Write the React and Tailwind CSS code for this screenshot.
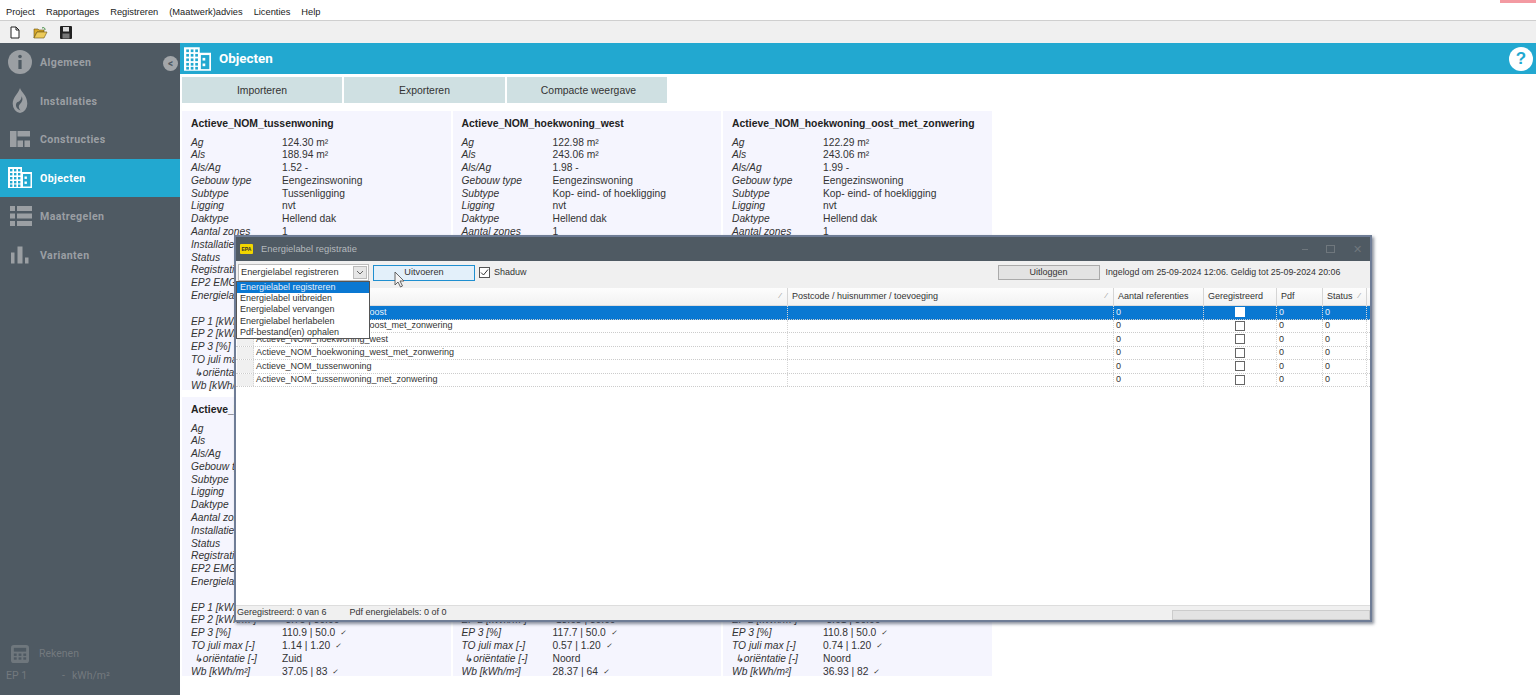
import React from "react";

const FONT = "font-['Liberation_Sans',Arial,sans-serif]";

function Row({ label, value, check }) {
  return (
    <div className="flex h-[12.8px] items-center whitespace-nowrap leading-[13px]">
      <div className="w-[91px] shrink-0 italic">{label}</div>
      <div className="flex items-center">
        {value}
        {check && value && <span className="ml-[5px] text-[7px] italic leading-none">✓</span>}
      </div>
    </div>
  );
}

function Card({ title, rows }) {
  return (
    <div className="h-[279px] bg-[#f5f5fe] pl-[9px] pt-[6px] text-[10.25px] text-[#333]">
      <div className="mb-[4.6px] h-[14px] whitespace-nowrap text-[10.4px] font-bold leading-[14px] text-[#222]">{title}</div>
      {rows.map((r, i) =>
        r ? <Row key={i} label={r[0]} value={r[1]} check={r[2]} /> : <div key={i} className="h-[12.8px]" />
      )}
    </div>
  );
}

const tail = (ep1, ep2, ep3, to, or, wb) => [
  null,
  ["EP 1 [kWh/m²]", ep1, true],
  ["EP 2 [kWh/m²]", ep2, true],
  ["EP 3 [%]", ep3, true],
  ["TO juli max [-]", to, true],
  ["\u00a0\u21B3oriëntatie [-]", or],
  ["Wb [kWh/m²]", wb, true],
];
const head = (ag, als, r, sub) => [
  ["Ag", ag],
  ["Als", als],
  ["Als/Ag", r],
  ["Gebouw type", sub ? "Eengezinswoning" : ""],
  ["Subtype", sub],
  ["Ligging", sub ? "nvt" : ""],
  ["Daktype", sub ? "Hellend dak" : ""],
  ["Aantal zones", sub ? "1" : ""],
  ["Installaties", ""],
  ["Status", ""],
  ["Registratie", ""],
  ["EP2 EMG", ""],
  ["Energielabel", ""],
];

const cards = [
  { title: "Actieve_NOM_tussenwoning", rows: [...head("124.30 m²", "188.94 m²", "1.52 -", "Tussenligging"), ...tail("", "", "", "", "", "")] },
  { title: "Actieve_NOM_hoekwoning_west", rows: [...head("122.98 m²", "243.06 m²", "1.98 -", "Kop- eind- of hoekligging"), ...tail("", "", "", "", "", "")] },
  { title: "Actieve_NOM_hoekwoning_oost_met_zonwering", rows: [...head("122.29 m²", "243.06 m²", "1.99 -", "Kop- eind- of hoekligging"), ...tail("", "", "", "", "", "")] },
  { title: "Actieve_NOM_hoekwoning_oost", rows: [...head("", "", "", ""), ...tail("", "-3.75 | 30.00", "110.9 | 50.0", "1.14 | 1.20", "Zuid", "37.05 | 83")] },
  { title: "Actieve_NOM_hoekwoning_west_met_zonwering", rows: [...head("", "", "", ""), ...tail("", "-13.68 | 30.00", "117.7 | 50.0", "0.57 | 1.20", "Noord", "28.37 | 64")] },
  { title: "Actieve_NOM_tussenwoning_met_zonwering", rows: [...head("", "", "", ""), ...tail("", "-3.61 | 30.00", "110.8 | 50.0", "0.74 | 1.20", "Noord", "36.93 | 82")] },
];

const I = ({ children, w = 24, h = 24, vb = "0 0 24 24", c = "#9b9fa3" }) => (
  <svg width={w} height={h} viewBox={vb} fill={c} className="shrink-0">{children}</svg>
);

const InfoIcon = () => (
  <I>
    <circle cx="12" cy="12" r="12" />
    <circle cx="12" cy="6.5" r="1.8" fill="#4f5a63" />
    <rect x="10.4" y="10" width="3.2" height="9" fill="#4f5a63" />
  </I>
);
const FlameIcon = () => (
  <I w={18} h={25} vb="4.500 0 15 24">
    <path d="M12 0c1 4 7 7 7 15a7.500 9 0 0 1-7 9 7.500 9 0 0 1-7-9C5 9 10 6 12 0Z" />
    <path d="M13.500 8c2 3.500 0 6-2 8-1 1-1 3 1 5.500-4-1-5.500-5-3.500-7.500 2-1 4.500-2 4.500-6Z" fill="#4f5a63" />
  </I>
);
const GridIcon = () => (
  <I w={20} h={16} vb="0 0 20 16">
    <rect x="0" y="0" width="6.500" height="16" />
    <rect x="7.500" y="0" width="12.500" height="5.500" />
    <rect x="7.500" y="9.500" width="5.500" height="6.500" />
    <rect x="14.500" y="9.500" width="5.500" height="6.500" />
  </I>
);
const BuildingIcon = ({ w = 24, h = 21, bg = "#22a8d0" }) => (
  <I w={w} h={h} vb="0 0 24 21" c="#fff">
    <path d="M0 0h14v5h10v16H0Z" />
    {[2, 6, 10].flatMap((x) =>
      [2, 6, 10, 14, 17.500].map((y) => <rect key={x + "-" + y} x={x} y={y} width="2.400" height="2.400" fill={bg} />)
    )}
    <rect x="15" y="7" width="7.500" height="12.500" fill={bg} />
    <rect x="16.500" y="9.500" width="2.400" height="2.400" fill="#fff" />
    <rect x="16.500" y="14.500" width="2.400" height="2.400" fill="#fff" />
  </I>
);
const ListIcon = () => (
  <I>
    {[2, 9.500, 17].map((y) => (
      <g key={y}>
        <rect x="2" y={y} width="5" height="5" />
        <rect x="9" y={y} width="15" height="5" />
      </g>
    ))}
  </I>
);
const BarsIcon = () => (
  <I>
    <rect x="3" y="9.500" width="3.500" height="11" />
    <rect x="9.500" y="3.500" width="5" height="17" />
    <rect x="17" y="14.500" width="3.500" height="6" />
  </I>
);
const CalcIcon = () => (
  <svg width="18" height="18" viewBox="0 0 19 19" className="shrink-0">
    <rect width="19" height="19" rx="3" fill="#6f777d" />
    <rect x="3" y="3" width="13" height="4" fill="#4f5a63" />
    {[3, 8, 13].flatMap((x) => [9, 13].map((y) => <rect key={x + "-" + y} x={x} y={y} width="3" height="2.500" fill="#4f5a63" />))}
  </svg>
);

const nav = [
  ["Algemeen", <InfoIcon />],
  ["Installaties", <FlameIcon />],
  ["Constructies", <GridIcon />],
  ["Objecten", <BuildingIcon />],
  ["Maatregelen", <ListIcon />],
  ["Varianten", <BarsIcon />],
];

const colW = ["w-[17px]", "w-[534px]", "w-[326px]", "w-[90px]", "w-[73px]", "w-[46px]", "w-[44px]"];
const names = [
  "Actieve_NOM_hoekwoning_oost",
  "Actieve_NOM_hoekwoning_oost_met_zonwering",
  "Actieve_NOM_hoekwoning_west",
  "Actieve_NOM_hoekwoning_west_met_zonwering",
  "Actieve_NOM_tussenwoning",
  "Actieve_NOM_tussenwoning_met_zonwering",
];

function Sort() {
  return <span className="absolute right-[6px] top-[2px] text-[8px] text-[#999]">⁄</span>;
}

function Dialog() {
  return (
    <div className="absolute left-[234px] top-[235px] flex h-[387px] w-[1138px] flex-col border-2 border-[#6f7d96] bg-white text-[9px] text-[#333] shadow-[2px_2px_3px_rgba(60,70,90,0.6)]">
      <div className="flex h-[24px] shrink-0 items-center bg-[#4f5a63] pl-[4px] pr-[8px] text-[#b4b9bd]">
        <div className="flex h-[10px] w-[13px] items-center justify-center rounded-[1px] bg-[#f2d500] text-[5px] font-bold leading-none text-[#333]">EPA</div>
        <span className="ml-[8px] text-[9.4px]">Energielabel registratie</span>
        <div className="ml-auto flex items-center gap-[18px] text-[#6f777d]">
          <div className="h-px w-[6px] bg-[#6f777d]" />
          <div className="h-[8px] w-[9px] border border-[#6f777d]" />
          <span className="text-[11px] leading-none">✕</span>
        </div>
      </div>
      <div className="flex h-[27px] shrink-0 items-center bg-[#f0f0f0] pb-[4px] pl-[2px]">
        <div className="flex h-[17px] w-[131px] items-center justify-between border border-[#bbb] bg-white pl-[2px] pr-[1px] text-[9.2px]">
          <span>Energielabel registreren</span>
          <div className="flex h-[13px] w-[14px] items-center justify-center border border-[#bbb] bg-[#e6e6e6]">
            <svg width="8" height="5" viewBox="0 0 8 5" fill="none" stroke="#666"><path d="M1 1l3 3 3-3" /></svg>
          </div>
        </div>
        <div className="ml-[4px] flex h-[16px] w-[102px] items-center justify-center border border-[#1f8fd0] bg-[#e3f0fa] text-[9.2px]">Uitvoeren</div>
        <div className="ml-[4px] flex h-[11px] w-[11px] items-center justify-center border border-[#555] bg-white">
          <svg width="9" height="9" viewBox="0 0 9 9" fill="none" stroke="#333"><path d="M1 4.500l2.500 2.500L8 1.500" /></svg>
        </div>
        <span className="ml-[4px]">Shaduw</span>
        <div className="ml-[471px] flex h-[15px] w-[102px] items-center justify-center border border-[#aaa] bg-[#e3e3e3]">Uitloggen</div>
        <span className="ml-[6px] whitespace-nowrap text-[8.8px]">Ingelogd om 25-09-2024 12:06. Geldig tot 25-09-2024 20:06</span>
      </div>
      <div className="flex h-[18px] shrink-0 border-b border-[#ddd] bg-[linear-gradient(#fdfdfd,#f2f2f2)] pl-px">
        {["", "", "Postcode / huisnummer / toevoeging", "Aantal referenties", "Geregistreerd", "Pdf", "Status"].map((h, i) => (
          <div key={i} className={`${colW[i]} relative flex items-center border-r border-[#d5d5d5] pl-[4px]`}>
            {h}
            {(i === 1 || i === 2 || i === 6) && <Sort />}
          </div>
        ))}
      </div>
      <div className="flex-1">
        {names.map((n, r) => (
          <div key={n} className={`flex h-[13.5px] border-b border-dotted border-[#ccc] pl-px ${r === 0 ? "bg-[#0a78d2] text-[#e8f2fb]" : ""}`}>
            {colW.map((w, i) => (
              <div key={i} className={`${w} flex items-center border-r border-dotted border-[#d5d5d5] ${i === 0 ? "bg-[#f0f0f0]" : "pl-[2px]"} ${i === 4 ? "justify-center !pl-0" : ""}`}>
                {i === 1 && n}
                {(i === 3 || i === 5 || i === 6) && "0"}
                {i === 4 && <div className={`h-[10px] w-[10px] border bg-white ${r === 0 ? "border-white" : "border-[#666]"}`} />}
              </div>
            ))}
          </div>
        ))}
      </div>
      <div className="flex h-[15px] shrink-0 items-center border-t border-[#ddd] bg-[#f0f0f0] pl-[1px]">
        <span>Geregistreerd: 0 van 6</span>
        <span className="ml-[23px]">Pdf energielabels: 0 of 0</span>
        <div className="ml-auto h-[10px] w-[198px] self-end border border-[#ccc] bg-[#e3e3e3]" />
      </div>
      <div className="absolute left-0 top-[44px] z-10 w-[134px] border border-[#555] bg-white text-[9px] leading-[11.2px]">
        {["Energielabel registreren", "Energielabel uitbreiden", "Energielabel vervangen", "Energielabel herlabelen", "Pdf-bestand(en) ophalen"].map((t, i) => (
          <div key={t} className={`pl-[3px] ${i === 0 ? "bg-[#0a78d2] text-[#e8f2fb]" : ""}`}>{t}</div>
        ))}
      </div>
      <svg width="13" height="18" viewBox="0 0 13 18" className="absolute left-[158px] top-[34px] z-10">
        <path d="M1 1v13l3-3 2.500 5 2-1-2.500-5h4Z" fill="#f4f4f4" stroke="#555" strokeWidth="0.9" />
      </svg>
    </div>
  );
}

export default function App() {
  return (
    <div className={`${FONT} relative flex h-[695px] w-[1536px] flex-col overflow-hidden bg-white`}>
      <div className="flex h-[5px] shrink-0 justify-end bg-white">
        <div className="h-[3px] w-[36px] bg-[#f39aa2]" />
      </div>
      <div className="flex h-[16px] shrink-0 items-center gap-[11px] border-b border-[#cfcfcf] pl-[6px] pt-[1px] text-[9.3px] text-[#222]">
        {["Project", "Rapportages", "Registreren", "(Maatwerk)advies", "Licenties", "Help"].map((m) => (
          <span key={m}>{m}</span>
        ))}
      </div>
      <div className="flex h-[22px] shrink-0 items-center gap-[12px] bg-[#f0f0f0] pl-[9px]">
        <svg width="12" height="13" viewBox="0 0 12 13" fill="#fff" stroke="#222"><path d="M2 1h5l3 3v8H2Z" /><path d="M7 1v3h3" fill="none" /></svg>
        <svg width="15" height="13" viewBox="0 0 15 13"><path d="M1 3h4l1 1h5v2H4L1 12Z" fill="#d9a928" stroke="#6b5510" strokeWidth=".6" /><path d="M1 12l3-6h10l-3 6Z" fill="#ecca5a" stroke="#6b5510" strokeWidth=".6" /><path d="M9 2c2-1 3 0 3 2" fill="none" stroke="#3c8a3c" /></svg>
        <svg width="12" height="13" viewBox="0 0 12 13"><rect width="12" height="13" rx="1" fill="#222" /><rect x="3" y="1" width="6" height="4.500" fill="#ddd" /><rect x="2.500" y="7.500" width="7" height="5" fill="#777" /></svg>
      </div>
      <div className="flex flex-1">
        <div className="flex w-[180px] shrink-0 flex-col bg-[#4f5a63] font-['Roboto',sans-serif]">
          <div className="relative">
            {nav.map(([t, icon]) => (
              <div key={t} className={`flex h-[38.5px] items-center gap-[8px] pl-[8px] text-[10.6px] font-bold tracking-[0.4px] ${t === "Objecten" ? "bg-[#22a8d0] text-white" : "text-[#9b9fa3]"}`}>
                <div className="flex w-[24px] justify-center">{icon}</div>
                <span className="pt-[2px]">{t}</span>
              </div>
            ))}
            <div className="absolute left-[163px] top-[13px] flex h-[15px] w-[15px] items-center justify-center rounded-full bg-[#a3a6a9] text-[10px] font-bold leading-none text-[#4f5a63]">&lt;</div>
          </div>
          <div className="mt-auto flex h-[25px] items-center gap-[10px] pl-[11px] text-[10.5px] text-[#73797e]">
            <CalcIcon />
            <span>Rekenen</span>
          </div>
          <div className="mb-[11px] mt-[2px] flex h-[16px] items-center pl-[6px] text-[10.5px] text-[#73797e]">
            <span className="w-[56px]">EP 1</span>
            <span className="w-[10px]">-</span>
            <span>kWh/m²</span>
          </div>
        </div>
        <div className="flex min-w-0 flex-1 flex-col">
          <div className="flex h-[31px] shrink-0 items-center bg-[#22a8d0] pl-[4px] pr-[3px] text-white">
            <BuildingIcon w={27} h={24} />
            <span className="ml-[8px] pt-[2px] font-['Roboto',sans-serif] text-[13.4px] font-bold">Objecten</span>
            <div className="ml-auto flex h-[24px] w-[24px] items-center justify-center rounded-full bg-white text-[17px] font-bold leading-none text-[#22a8d0]">?</div>
          </div>
          <div className="mt-[3px] flex h-[26px] shrink-0 gap-[2px] pl-[2px] text-[10.4px] text-[#333]">
            {["Importeren", "Exporteren", "Compacte weergave"].map((b, i) => (
              <div key={b} className={`flex items-center justify-center bg-[#cfe0e2] pt-[1px] ${i === 0 ? "w-[160px]" : i === 1 ? "w-[161px]" : "w-[160px] pl-[3px]"}`}>{b}</div>
            ))}
          </div>
          <div className="mt-[8px] grid grid-cols-[268.5px_268.5px_268.5px] gap-x-[2px] gap-y-[7px] pl-[2px]">
            {cards.map((c, i) => (
              <Card key={i} {...c} />
            ))}
          </div>
        </div>
      </div>
      <Dialog />
    </div>
  );
}
